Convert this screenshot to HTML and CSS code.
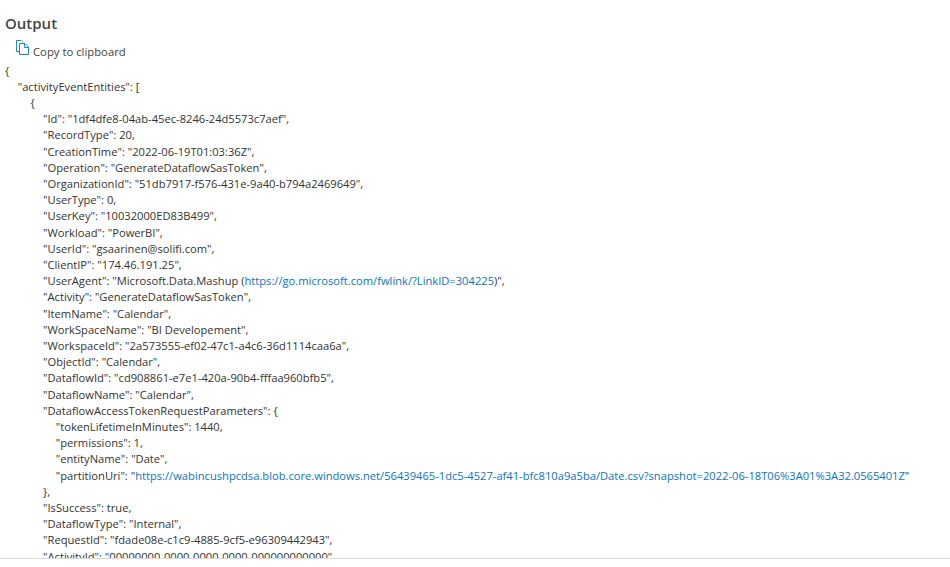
FILE: index.html
```html
<!DOCTYPE html>
<html lang="en">
<head>
    <meta charset="UTF-8">
    <title>Output</title>
    <link rel="stylesheet" href="styles.css">
</head>
<body>
    <main class="output-panel">
        <h2 class="output-title">Output</h2>
        <button class="copy-button" type="button">
            <svg class="copy-icon" width="14" height="15" viewBox="0 0 14 15" fill="none" stroke="#1a86d9" stroke-width="1">
                <path d="M3.5 11.5H.5V.5H5L7 2.5"/>
                <path d="M3.5 3.5H9L12.5 7V14.5H3.5Z"/>
                <path d="M8.5 3.5V7.5H12.5"/>
            </svg>
            <span>Copy to clipboard</span>
        </button>
        <div class="json">
            <div>{</div>
            <div class="indent">
                <div>"activityEventEntities": [</div>
                <div class="indent">
                    <div>{</div>
                    <div class="indent">
                        <div>"Id": "1df4dfe8-04ab-45ec-8246-24d5573c7aef",</div>
                        <div>"RecordType": 20,</div>
                        <div>"CreationTime": "2022-06-19T01:03:36Z",</div>
                        <div>"Operation": "GenerateDataflowSasToken",</div>
                        <div>"OrganizationId": "51db7917-f576-431e-9a40-b794a2469649",</div>
                        <div>"UserType": 0,</div>
                        <div>"UserKey": "10032000ED83B499",</div>
                        <div>"Workload": "PowerBI",</div>
                        <div>"UserId": "gsaarinen@solifi.com",</div>
                        <div>"ClientIP": "174.46.191.25",</div>
                        <div>"UserAgent": "Microsoft.Data.Mashup (<a href="#">https://go.microsoft.com/fwlink/?LinkID=304225</a>)",</div>
                        <div>"Activity": "GenerateDataflowSasToken",</div>
                        <div>"ItemName": "Calendar",</div>
                        <div>"WorkSpaceName": "BI Developement",</div>
                        <div>"WorkspaceId": "2a573555-ef02-47c1-a4c6-36d1114caa6a",</div>
                        <div>"ObjectId": "Calendar",</div>
                        <div>"DataflowId": "cd908861-e7e1-420a-90b4-fffaa960bfb5",</div>
                        <div>"DataflowName": "Calendar",</div>
                        <div>"DataflowAccessTokenRequestParameters": {</div>
                        <div class="indent">
                            <div>"tokenLifetimeInMinutes": 1440,</div>
                            <div>"permissions": 1,</div>
                            <div>"entityName": "Date",</div>
                            <div>"partitionUri": "<a href="#">https://wabincushpcdsa.blob.core.windows.net/56439465-1dc5-4527-af41-bfc810a9a5ba/Date.csv?snapshot=2022-06-18T06%3A01%3A32.0565401Z</a>"</div>
                        </div>
                        <div>},</div>
                        <div>"IsSuccess": true,</div>
                        <div>"DataflowType": "Internal",</div>
                        <div>"RequestId": "fdade08e-c1c9-4885-9cf5-e96309442943",</div>
                        <div>"ActivityId": "00000000-0000-0000-0000-000000000000"</div>
                    </div>
                </div>
            </div>
        </div>
    </main>
    <footer class="page-footer"></footer>
</body>
</html>
```

FILE: styles.css
```css
html, body {
    height: 100%;
}
body {
    margin: 0;
    display: flex;
    flex-direction: column;
    overflow: hidden;
    background-color: white;
    color: #333;
    font-family: "Open Sans", sans-serif;
    font-size: 11.16px;
}
.output-panel {
    height: 558px;
    overflow: hidden;
    padding-left: 5px;
}
.output-title {
    margin: 0;
    padding-top: 13px;
    font-size: 15px;
    line-height: 21px;
    font-weight: 600;
    color: #444;
}
.copy-button {
    display: flex;
    align-items: flex-start;
    gap: 3px;
    padding: 6px 0 0 11px;
    height: 28.6px;
    border: 0;
    background: none;
    font: inherit;
    font-size: 11.3px;
    color: #444;
}
.copy-button span {
    line-height: 18px;
    padding-top: 2.5px;
}
.json {
    line-height: 16.2px;
    white-space: nowrap;
}
.indent {
    padding-left: 12.7px;
}
.json a {
    color: #0a74c9;
    text-decoration: none;
}
.page-footer {
    flex: 1;
    border-top: 1px solid #d9d9d9;
}
```
